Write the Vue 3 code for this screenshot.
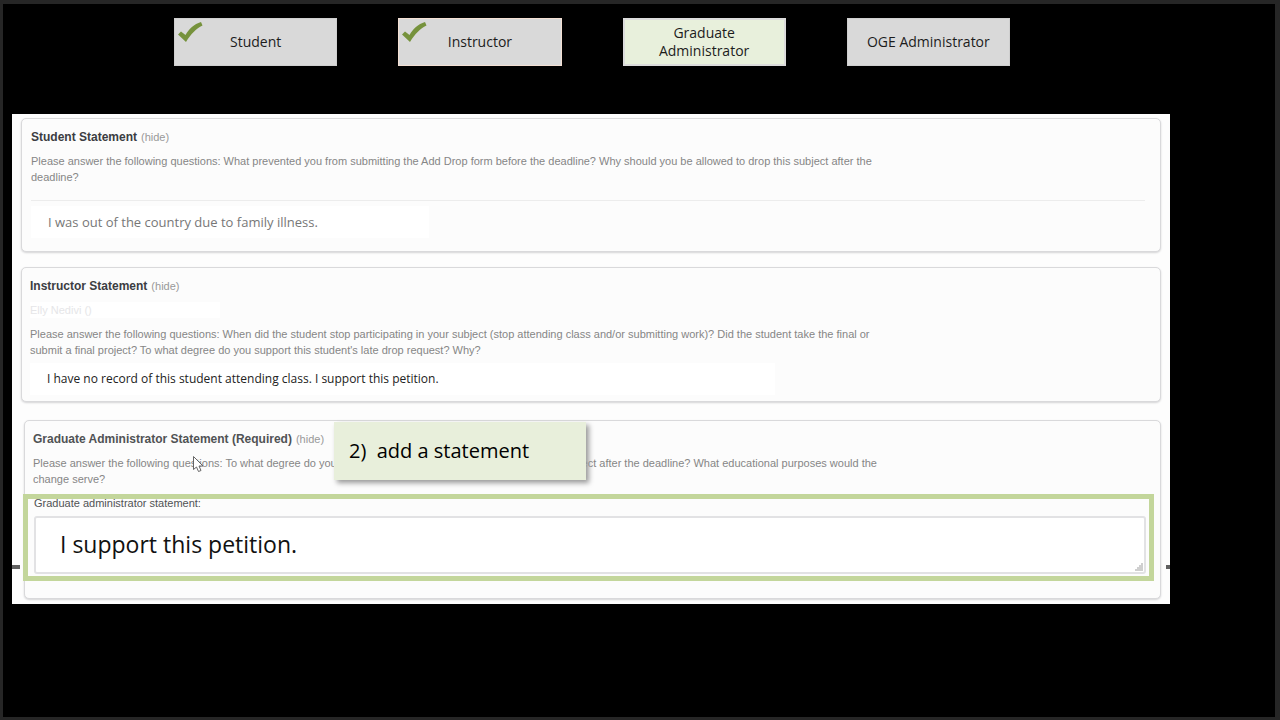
<script setup>
import { ref } from 'vue'

const steps = [
  { name: 'Student', state: 'done' },
  { name: 'Instructor', state: 'done warm' },
  { name: 'Graduate Administrator', state: 'active' },
  { name: 'OGE Administrator', state: 'pending' },
]

const statement = ref('I support this petition.')
</script>

<template>
  <div class="frame">
    <ol class="steps">
      <li v-for="step in steps" :key="step.name" class="step" :class="step.state">
        <svg v-if="step.state.startsWith('done')" class="tick" viewBox="0 0 26 22" aria-hidden="true">
          <path d="M1 13.500 L4 10.500 L8.500 14 C12 8 17 3 24 1 L25.500 4.500 C19 7.500 14 13 9 21 Z" />
        </svg>
        <span class="step-name">{{ step.name }}</span>
      </li>
    </ol>

    <main class="panel">
      <section class="card student">
        <header class="head"><h2>Student Statement</h2><button type="button">(hide)</button></header>
        <p class="question">Please answer the following questions: What prevented you from submitting the Add Drop form before the deadline? Why should you be allowed to drop this subject after the deadline?</p>
        <hr />
        <p class="answer muted">I was out of the country due to family illness.</p>
      </section>

      <section class="card instructor">
        <header class="head"><h2>Instructor Statement</h2><button type="button">(hide)</button></header>
        <p class="person">Elly Nedivi ()</p>
        <p class="question">Please answer the following questions: When did the student stop participating in your subject (stop attending class and/or submitting work)? Did the student take the final or submit a final project? To what degree do you support this student's late drop request? Why?</p>
        <p class="answer wide">I have no record of this student attending class. I support this petition.</p>
      </section>

      <section class="card admin">
        <header class="head"><h2>Graduate Administrator Statement (Required)</h2><button type="button">(hide)</button></header>
        <p class="question">Please answer the following questions: To what degree do you support the student's late petition to drop this subject after the deadline? What educational purposes would the change serve?</p>
        <div class="highlight">
          <label for="statement">Graduate administrator statement:</label>
          <div class="field">
            <textarea id="statement" v-model="statement" rows="1"></textarea>
            <svg class="grip" viewBox="0 0 8 8" aria-hidden="true">
              <path d="M6 0h2v8H0V6h2V4h2V2h2z" />
            </svg>
          </div>
        </div>
        <aside class="callout">2)&nbsp; add a statement</aside>
        <svg class="cursor" viewBox="0 0 12 18" aria-hidden="true">
          <path d="M1.500 1.500 V14.500 L4.500 12 L6.500 16.500 L9 15.500 L7 11 H11 Z" />
        </svg>
      </section>
      <span class="mark left"></span>
      <span class="mark right"></span>
    </main>
  </div>
</template>

<style>
body {
  margin: 0;
  background: #000;
}
</style>

<style scoped>
.frame {
  box-sizing: border-box;
  min-height: 100vh;
  border: solid #262626;
  border-width: 4px 5px 3px 3px;
  background: #000;
  font-family: "Open Sans", sans-serif;
}

.steps {
  display: grid;
  grid-template-columns: repeat(4, 1fr);
  gap: 61px;
  margin: 0;
  padding: 14px 265px 0 171px;
  list-style: none;
}

.step {
  position: relative;
  display: flex;
  align-items: center;
  justify-content: center;
  box-sizing: border-box;
  height: 48px;
  border: 1px solid #cfcfcf;
  background: #d9d9d9;
  color: #1c1c1c;
  font-size: 14px;
  line-height: 18px;
  text-align: center;
}

.step.warm {
  border-color: #f3dfd3;
}

.step.active {
  border: 2px solid #dcdcdc;
  background: #e8f0dc;
}

.active .step-name {
  width: 100px;
}

.tick {
  position: absolute;
  top: 2px;
  left: 2px;
  width: 26px;
  height: 22px;
  fill: #76923c;
}

.panel {
  position: relative;
  display: flex;
  flex-direction: column;
  margin: 48px 105px 0 9px;
  padding: 4px 9px 5px;
  background: #fdfdfd;
}

.card {
  position: relative;
  box-sizing: border-box;
  border: 1px solid #d9d9db;
  border-radius: 5px;
  box-shadow: 0 1px 2px #d4d4d6;
  background: #fcfcfc;
  font-family: "Liberation Sans", Arial, sans-serif;
  font-size: 11px;
  line-height: 16px;
  color: #868686;
}

.student {
  min-height: 134px;
  padding: 10px 15px 13px 9px;
}

.instructor {
  min-height: 135px;
  margin-top: 15px;
  padding: 10px 15px 6px 8px;
}

.admin {
  margin-top: 18px;
  margin-left: 3px;
  padding: 10px 6px 17px 8px;
}

.head {
  display: flex;
  gap: 4px;
}

h2 {
  margin: 0;
  color: #3b3d42;
  font-size: 12px;
  line-height: 16px;
}

.admin h2 {
  color: #505254;
}

button {
  border: 0;
  padding: 0;
  background: none;
  color: #999;
  font: inherit;
}

.question {
  max-width: 874px;
  margin: 8px 0 0;
}

hr {
  height: 1px;
  margin: 15px 0 5px;
  border: 0;
  background: #ececec;
}

.person {
  width: 190px;
  margin: 8px 0 0;
  background: #fff;
  color: #e6e6e8;
}

.answer {
  box-sizing: border-box;
  width: 398px;
  margin: 0;
  padding: 6px 17px;
  background: #fff;
  color: #222;
  font-family: "Open Sans", sans-serif;
  font-size: 12px;
  line-height: 20px;
}

.answer.muted {
  color: #777;
  font-size: 13px;
}

.answer.wide {
  width: 745px;
  margin-top: 5px;
}

.highlight {
  margin: 7px 0 0 -10px;
  border: 5px solid #c3d69b;
  padding: 0 3px 2px 6px;
}

label {
  display: block;
  line-height: 8px;
  color: #505254;
}

.field {
  position: relative;
  display: flex;
  margin-top: 9px;
}

textarea {
  box-sizing: border-box;
  width: 100%;
  height: 58px;
  border: 2px solid #e2e2e4;
  border-radius: 3px;
  padding: 10px 24px;
  background: #fff;
  color: #111;
  font-family: "Open Sans", sans-serif;
  font-size: 23px;
  line-height: 32px;
  resize: none;
  overflow: hidden;
  outline: none;
}

.grip {
  position: absolute;
  right: 3px;
  bottom: 3px;
  width: 8px;
  height: 8px;
  fill: #cfcfcf;
}

.callout {
  position: absolute;
  top: 1px;
  left: 309px;
  box-sizing: border-box;
  width: 252px;
  padding: 15px;
  background: #e8efdb;
  box-shadow: 3px 3px 5px #9a9a9a;
  color: #000;
  font-family: "Open Sans", sans-serif;
  font-size: 20px;
  line-height: 28px;
}

.cursor {
  position: absolute;
  top: 34px;
  left: 167px;
  width: 12px;
  height: 18px;
  fill: #fff;
  stroke: #666;
}

.mark {
  position: absolute;
  bottom: 35px;
  height: 4px;
  background: #606060;
}

.mark.left {
  left: 0;
  width: 8px;
}

.mark.right {
  right: 0;
  width: 4px;
}
</style>
